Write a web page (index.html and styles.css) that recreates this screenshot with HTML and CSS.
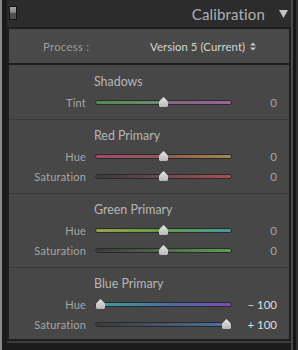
FILE: index.html
```html
<!DOCTYPE html>
<html>
<head>
<meta charset="utf-8">
<link rel="stylesheet" href="styles.css">
</head>
<body>
<div class="frame">
  <div class="col">
    <div class="header">
      <span class="switch"><span class="switch-top"></span><span class="switch-bot"></span></span>
      <span class="title">Calibration</span>
      <svg class="tri" width="9" height="8" viewBox="0 0 9 8"><path d="M0 0 L9 0 L4.5 8 Z" fill="#c4c4c4"/></svg>
    </div>
    <div class="panel">
      <div class="process">
        <span class="proc-label">Process :</span>
        <span class="proc-value">Version 5 (Current)</span>
        <svg class="updown" width="6" height="9" viewBox="0 0 6 9"><path d="M0 3.5 L3 0.5 L6 3.5 Z M0 5.5 L3 8.5 L6 5.5 Z" fill="#c8c8c8"/></svg>
      </div>
      <div class="divider"></div>

      <div class="section first">
        <div class="sec-title">Shadows</div>
        <div class="row">
          <span class="label">Tint</span>
          <div class="slider"><div class="track t-tint"></div><span class="thumb" style="left:50%"></span></div>
          <span class="val">0</span>
        </div>
      </div>

      <div class="section">
        <div class="sec-title">Red Primary</div>
        <div class="row">
          <span class="label">Hue</span>
          <div class="slider"><div class="track t-rhue"></div><span class="thumb" style="left:50%"></span></div>
          <span class="val">0</span>
        </div>
        <div class="row">
          <span class="label">Saturation</span>
          <div class="slider"><div class="track t-rsat"></div><span class="thumb" style="left:50%"></span></div>
          <span class="val">0</span>
        </div>
      </div>

      <div class="section">
        <div class="sec-title">Green Primary</div>
        <div class="row">
          <span class="label">Hue</span>
          <div class="slider"><div class="track t-ghue"></div><span class="thumb" style="left:50%"></span></div>
          <span class="val">0</span>
        </div>
        <div class="row">
          <span class="label">Saturation</span>
          <div class="slider"><div class="track t-gsat"></div><span class="thumb" style="left:50%"></span></div>
          <span class="val">0</span>
        </div>
      </div>

      <div class="section last">
        <div class="sec-title">Blue Primary</div>
        <div class="row">
          <span class="label">Hue</span>
          <div class="slider"><div class="track t-bhue"></div><span class="thumb min" style="left:0%"></span></div>
          <span class="val strong">– 100</span>
        </div>
        <div class="row">
          <span class="label">Saturation</span>
          <div class="slider"><div class="track t-bsat"></div><span class="thumb max" style="left:100%"></span></div>
          <span class="val strong">+ 100</span>
        </div>
      </div>
    </div>
    <div class="under"></div>
  </div>
  <div class="rstrip"></div>
</div>
</body>
</html>
```

FILE: styles.css
```css
* { box-sizing: border-box; }
html, body { margin: 0; padding: 0; }
body {
  background: #1a1a1a;
  font-family: Lato, "Open Sans", sans-serif;
  width: 298px;
  height: 350px;
  overflow: hidden;
}
.frame {
  display: flex;
  height: 350px;
  border-left: 2px solid #8a8a8a;
  background: #1b1b1b;
}
.col {
  margin-left: 5px;
  width: 284px;
  display: flex;
  flex-direction: column;
}
.header {
  height: 27px;
  background: #2c2c2c;
  display: flex;
  align-items: center;
  padding-left: 2px;
  padding-right: 3px;
}
.switch {
  width: 8px;
  height: 14px;
  border: 1px solid #141414;
  display: flex;
  flex-direction: column;
  margin-top: -1px;
}
.switch-top { flex: 1; background: linear-gradient(#a8a8a8, #7c7c7c); }
.switch-bot { flex: 1; background: #4e4e4e; }
.title {
  margin-left: auto;
  color: #b0b0b0;
  font-size: 15px;
  letter-spacing: 0.15px;
}
.tri { margin-left: 14px; }
.panel {
  border: 2px solid #1e1e1e;
  background: #474747;
}
.process {
  height: 34px;
  display: flex;
  align-items: center;
  font-size: 11.3px;
  background: #494949;
}
.proc-label {
  margin-left: 34px;
  width: 107px;
  color: #9c9c9c;
  letter-spacing: 0.3px;
}
.proc-value { color: #d6d6d6; letter-spacing: 0.1px; }
.updown { margin-left: 5px; }
.divider { height: 2px; background: #1e1e1e; }
.section {
  border-top: 1px solid #3a3a3a;
  padding: 5px 12px 7px 0;
}
.section.first { border-top: 0; padding-top: 6px; }
.section.last { padding-bottom: 5px; }
.sec-title {
  height: 21px;
  line-height: 21px;
  padding-left: 85px;
  color: #b6b6b6;
  font-size: 12.4px;
}
.row {
  height: 20px;
  display: grid;
  grid-template-columns: 77px 137px 36px;
  column-gap: 9px;
  align-items: center;
  font-size: 11px;
}
.label { text-align: right; color: #a6a6a6; letter-spacing: 0.2px; }
.val { text-align: right; color: #a4a4a4; font-size: 11.5px; }
.val.strong { color: #dedede; }
.slider { position: relative; height: 10px; }
.track {
  position: absolute;
  left: 0; right: 0; top: 3px;
  height: 5px;
  border: 1px solid #2a2a2a;
  border-radius: 3px;
}
.t-tint { background: linear-gradient(to right, #4f8c4f, #6b8a6b 45%, #7d6a7d 55%, #a45ca4); }
.t-rhue { background: linear-gradient(to right, #a9466a, #8e5a5a 50%, #a2884a); }
.t-rsat { background: linear-gradient(to right, #3a3a3a, #6a4a4e 50%, #b04a58); }
.t-ghue { background: linear-gradient(to right, #9aa244, #5e9a4a 50%, #4a9a98); }
.t-gsat { background: linear-gradient(to right, #3a3a3a, #4e6a4a 50%, #5aa050); }
.t-bhue { background: linear-gradient(to right, #3aa098, #4a6ca4 55%, #7a4cb2); }
.t-bsat { background: linear-gradient(to right, #3a3a3a, #46566e 50%, #4a72aa); }
.thumb {
  position: absolute;
  top: 0;
  width: 9px;
  height: 10px;
  margin-left: -4.5px;
  background: linear-gradient(#e6e6e6, #b8b8b8);
  clip-path: polygon(50% 0, 100% 45%, 100% 90%, 88% 100%, 12% 100%, 0 90%, 0 45%);
}
.thumb.min { margin-left: 1px; }
.thumb.max { margin-left: -10px; }
.under {
  height: 2px;
  background: #3c3c3c;
}
.rstrip {
  width: 7px;
  border-left: 2px solid #4a4a4a;
  border-right: 2px solid #303030;
  background: #161616;
}
```
